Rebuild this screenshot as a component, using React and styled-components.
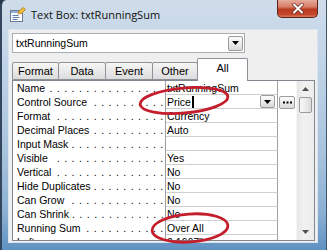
import React, { useLayoutEffect, useRef, useState } from 'react';
import styled, { createGlobalStyle } from 'styled-components';

const Global = createGlobalStyle`
  html, body { margin: 0; padding: 0; background: #26374b; }
  body { width: 327px; height: 250px; overflow: hidden; }
`;

const Window = styled.div`
  position: relative;
  width: 327px;
  height: 250px;
  box-sizing: border-box;
  display: flex;
  flex-direction: column;
  background: linear-gradient(180deg, #cfdcea 0%, #c1d4e7 25%, #a9c4de 60%, #8cb0d3 85%, #5f91c2 100%);
  border-left: 2px solid #33465e;
  border-right: 1px solid #3c536c;
  border-top-left-radius: 6px;
  overflow: hidden;
  font-family: "Liberation Sans", Arial, sans-serif;
`;

const TitleBar = styled.div`
  height: 29px;
  flex: none;
  display: flex;
  align-items: flex-start;
  padding-left: 7px;
`;

const TitleIcon = styled.svg`
  flex: none;
  width: 17px;
  height: 16px;
  margin-top: 7px;
`;

const TitleText = styled.span`
  margin-top: 6px;
  margin-left: 5px;
  font-family: "Open Sans", "Liberation Sans", sans-serif;
  font-size: 11px;
  line-height: 17px;
  color: #111;
`;

const CloseButton = styled.div`
  margin-left: auto;
  margin-right: 8px;
  width: 41px;
  height: 18px;
  box-sizing: border-box;
  border: 1px solid #5b2418;
  border-top: none;
  border-radius: 0 0 5px 5px;
  background: linear-gradient(180deg, #e6ab9c 0%, #d77d67 40%, #b93a22 55%, #c5492c 85%, #d8785c 100%);
  display: flex;
  align-items: center;
  justify-content: center;
`;

const Frame = styled.div`
  flex: 1;
  min-height: 0;
  display: flex;
  padding: 0 8px 7px 6px;
`;

const Client = styled.div`
  flex: 1;
  min-width: 0;
  display: flex;
  flex-direction: column;
  box-sizing: border-box;
  background: #efefef;
  border: 1px solid #d9e4ef;
  padding: 3px 2px 1px 3px;
`;

const Combo = styled.div`
  width: 233px;
  height: 20px;
  box-sizing: border-box;
  flex: none;
  display: flex;
  align-items: center;
  background: #fff;
  border: 1px solid #a9adb3;
  padding: 0 1px 0 3px;
  font-size: 10.5px;
  color: #000;
`;

const ComboText = styled.span`
  flex: 1;
`;

const DropButton = styled.div`
  flex: none;
  width: ${p => p.$w || 15}px;
  height: ${p => p.$h || 15}px;
  box-sizing: border-box;
  border: 1px solid #9d9d9d;
  border-radius: 2px;
  background: linear-gradient(180deg, #fbfbfb 0%, #ececec 50%, #d9d9d9 100%);
  display: flex;
  align-items: center;
  justify-content: center;
`;

const Tabs = styled.div`
  flex: none;
  height: 22px;
  margin-top: 5px;
  display: flex;
  align-items: flex-end;
  position: relative;
  z-index: 1;
`;

const Tab = styled.div`
  width: ${p => p.$w}px;
  height: ${p => (p.$active ? 23 : 18)}px;
  margin-bottom: ${p => (p.$active ? -1 : 0)}px;
  margin-left: -1px;
  box-sizing: border-box;
  border: 1px solid #8e9197;
  border-bottom: ${p => (p.$active ? 'none' : '1px solid #8e9197')};
  border-radius: 2px 2px 0 0;
  background: ${p => (p.$active ? '#fff' : 'linear-gradient(180deg, #f6f6f6 0%, #e9e9e9 50%, #dcdcdc 100%)')};
  display: flex;
  justify-content: center;
  align-items: ${p => (p.$active ? 'flex-start' : 'center')};
  padding-top: ${p => (p.$active ? 3 : 0)}px;
  font-size: 11px;
  color: #000;
  &:first-child { margin-left: 0; }
`;

const Grid = styled.div`
  flex: 1;
  min-height: 0;
  display: flex;
  background: #fff;
  border: 1px solid #828790;
  overflow: hidden;
`;

const Table = styled.div`
  flex: 1;
  display: flex;
  flex-direction: column;
  overflow: hidden;
`;

const Row = styled.div`
  flex: none;
  height: 14px;
  display: grid;
  grid-template-columns: 153px 112px 19px;
  font-size: 10.5px;
  color: #000;
`;

const Label = styled.div`
  display: flex;
  align-items: center;
  padding-left: 4px;
  border-right: 1px solid #a0a0a0;
  white-space: nowrap;
  overflow: hidden;
`;

const LabelText = styled.span`
  flex: none;
`;

const LeaderBox = styled.span`
  flex: 1;
  min-width: 0;
  white-space: nowrap;
  text-align: right;
  letter-spacing: 0.78px;
  padding: 0 1px 0 3px;
`;

const Value = styled.div`
  display: flex;
  align-items: center;
  padding-left: 1px;
  padding-right: 2px;
  border-right: 1px solid #a0a0a0;
  border-bottom: 1px solid #cfcfcf;
  white-space: nowrap;
  overflow: hidden;
`;

const Caret = styled.span`
  display: inline-block;
  width: 2px;
  height: 12px;
  background: #000;
  margin-left: 1px;
`;

const Spacer = styled.span`
  flex: 1;
`;

const Builder = styled.div`
  display: flex;
  align-items: center;
  padding-left: 1px;
`;

const Scrollbar = styled.div`
  flex: none;
  width: 17px;
  display: flex;
  flex-direction: column;
  align-items: center;
  background: linear-gradient(90deg, #e6e6e6 0%, #f1f1f1 40%, #ececec 100%);
  border-left: 1px solid #f6f6f6;
`;

const ArrowBox = styled.div`
  flex: none;
  height: 16px;
  width: 100%;
  display: flex;
  align-items: center;
  justify-content: center;
`;

const Thumb = styled.div`
  flex: none;
  width: 13px;
  height: 16px;
  box-sizing: border-box;
  border: 1px solid #9a9a9a;
  border-radius: 2px;
  background: linear-gradient(90deg, #f8f8f8 0%, #ececec 50%, #dadada 100%);
`;

const Track = styled.div`
  flex: 1;
`;

const Annotations = styled.svg`
  position: absolute;
  left: -2px;
  top: 0;
  width: 327px;
  height: 250px;
  pointer-events: none;
`;

function Leader() {
  const ref = useRef(null);
  const [count, setCount] = useState(0);
  useLayoutEffect(() => {
    const el = ref.current;
    if (!el) return;
    const w = el.clientWidth - 4;
    setCount(Math.max(0, Math.floor((w + 4.5) / 7.4)));
  }, []);
  return <LeaderBox ref={ref}>{Array(count).fill('.').join(' ')}</LeaderBox>;
}

const rows = [
  ['Name', 'txtRunningSum'],
  ['Control Source', 'Price', true],
  ['Format', 'Currency'],
  ['Decimal Places', 'Auto'],
  ['Input Mask', ''],
  ['Visible', 'Yes'],
  ['Vertical', 'No'],
  ['Hide Duplicates', 'No'],
  ['Can Grow', 'No'],
  ['Can Shrink', 'No'],
  ['Running Sum', 'Over All'],
  ['Left', '0.1667"'],
];

const tabs = [
  ['Format', 47],
  ['Data', 48],
  ['Event', 48],
  ['Other', 46],
  ['All', 51, true],
];

const DownTriangle = ({ color = '#000' }) => (
  <svg width="7" height="4" viewBox="0 0 7 4">
    <path d="M0 0 H7 L3.5 4 Z" fill={color} />
  </svg>
);

export default function App() {
  return (
    <>
      <Global />
      <Window>
        <TitleBar>
          <TitleIcon viewBox="0 0 17 16">
            <rect x="1.5" y="3.5" width="12" height="11" fill="#fdfdfd" stroke="#6c7d92" />
            <rect x="2" y="4" width="11" height="2" fill="#8fb0d8" />
            <path d="M3.5 8.5h6M3.5 10.5h7M3.5 12.5h5" stroke="#5b7fb4" strokeWidth="1" />
            <path d="M9 5 L14 0.5 L16.5 2.5 L12 7 Z" fill="#f2c13c" stroke="#a8781a" strokeWidth="0.8" />
            <path d="M9 5 L12 7 L8.5 7.5 Z" fill="#e39b3b" />
          </TitleIcon>
          <TitleText>Text Box: txtRunningSum</TitleText>
          <CloseButton>
            <svg width="12" height="11" viewBox="0 0 12 11">
              <path d="M2 1.5 L10 9.5 M10 1.5 L2 9.5" stroke="#6a2a20" strokeWidth="3.4" strokeLinecap="round" />
              <path d="M2 1.5 L10 9.5 M10 1.5 L2 9.5" stroke="#fff" strokeWidth="2" strokeLinecap="round" />
            </svg>
          </CloseButton>
        </TitleBar>
        <Frame>
          <Client>
            <Combo>
              <ComboText>txtRunningSum</ComboText>
              <DropButton>
                <DownTriangle />
              </DropButton>
            </Combo>
            <Tabs>
              {tabs.map(([name, w, active]) => (
                <Tab key={name} $w={w} $active={active}>
                  {name}
                </Tab>
              ))}
            </Tabs>
            <Grid>
              <Table>
                {rows.map(([label, value, active]) => (
                  <Row key={label}>
                    <Label>
                      <LabelText>{label}</LabelText>
                      <Leader />
                    </Label>
                    <Value>
                      {value}
                      {active && <Caret />}
                      {active && <Spacer />}
                      {active && (
                        <DropButton $w={15} $h={13}>
                          <DownTriangle />
                        </DropButton>
                      )}
                    </Value>
                    <Builder>
                      {active && (
                        <DropButton $w={16} $h={13}>
                          <svg width="9" height="3" viewBox="0 0 9 3">
                            <rect x="0" y="0.5" width="2" height="2" fill="#000" />
                            <rect x="3.5" y="0.5" width="2" height="2" fill="#000" />
                            <rect x="7" y="0.5" width="2" height="2" fill="#000" />
                          </svg>
                        </DropButton>
                      )}
                    </Builder>
                  </Row>
                ))}
              </Table>
              <Scrollbar>
                <ArrowBox>
                  <svg width="7" height="4" viewBox="0 0 7 4">
                    <path d="M0 4 H7 L3.5 0 Z" fill="#505050" />
                  </svg>
                </ArrowBox>
                <Thumb />
                <Track />
                <ArrowBox>
                  <DownTriangle color="#505050" />
                </ArrowBox>
              </Scrollbar>
            </Grid>
          </Client>
        </Frame>
        <Annotations viewBox="0 0 327 250">
          <ellipse cx="184" cy="100.5" rx="44" ry="12.5" transform="rotate(-5 184 100.5)" fill="none" stroke="#c41d2b" strokeWidth="2.8" />
          <ellipse cx="190" cy="228" rx="38" ry="14" transform="rotate(-4 190 228)" fill="none" stroke="#c41d2b" strokeWidth="2.8" />
        </Annotations>
      </Window>
    </>
  );
}
